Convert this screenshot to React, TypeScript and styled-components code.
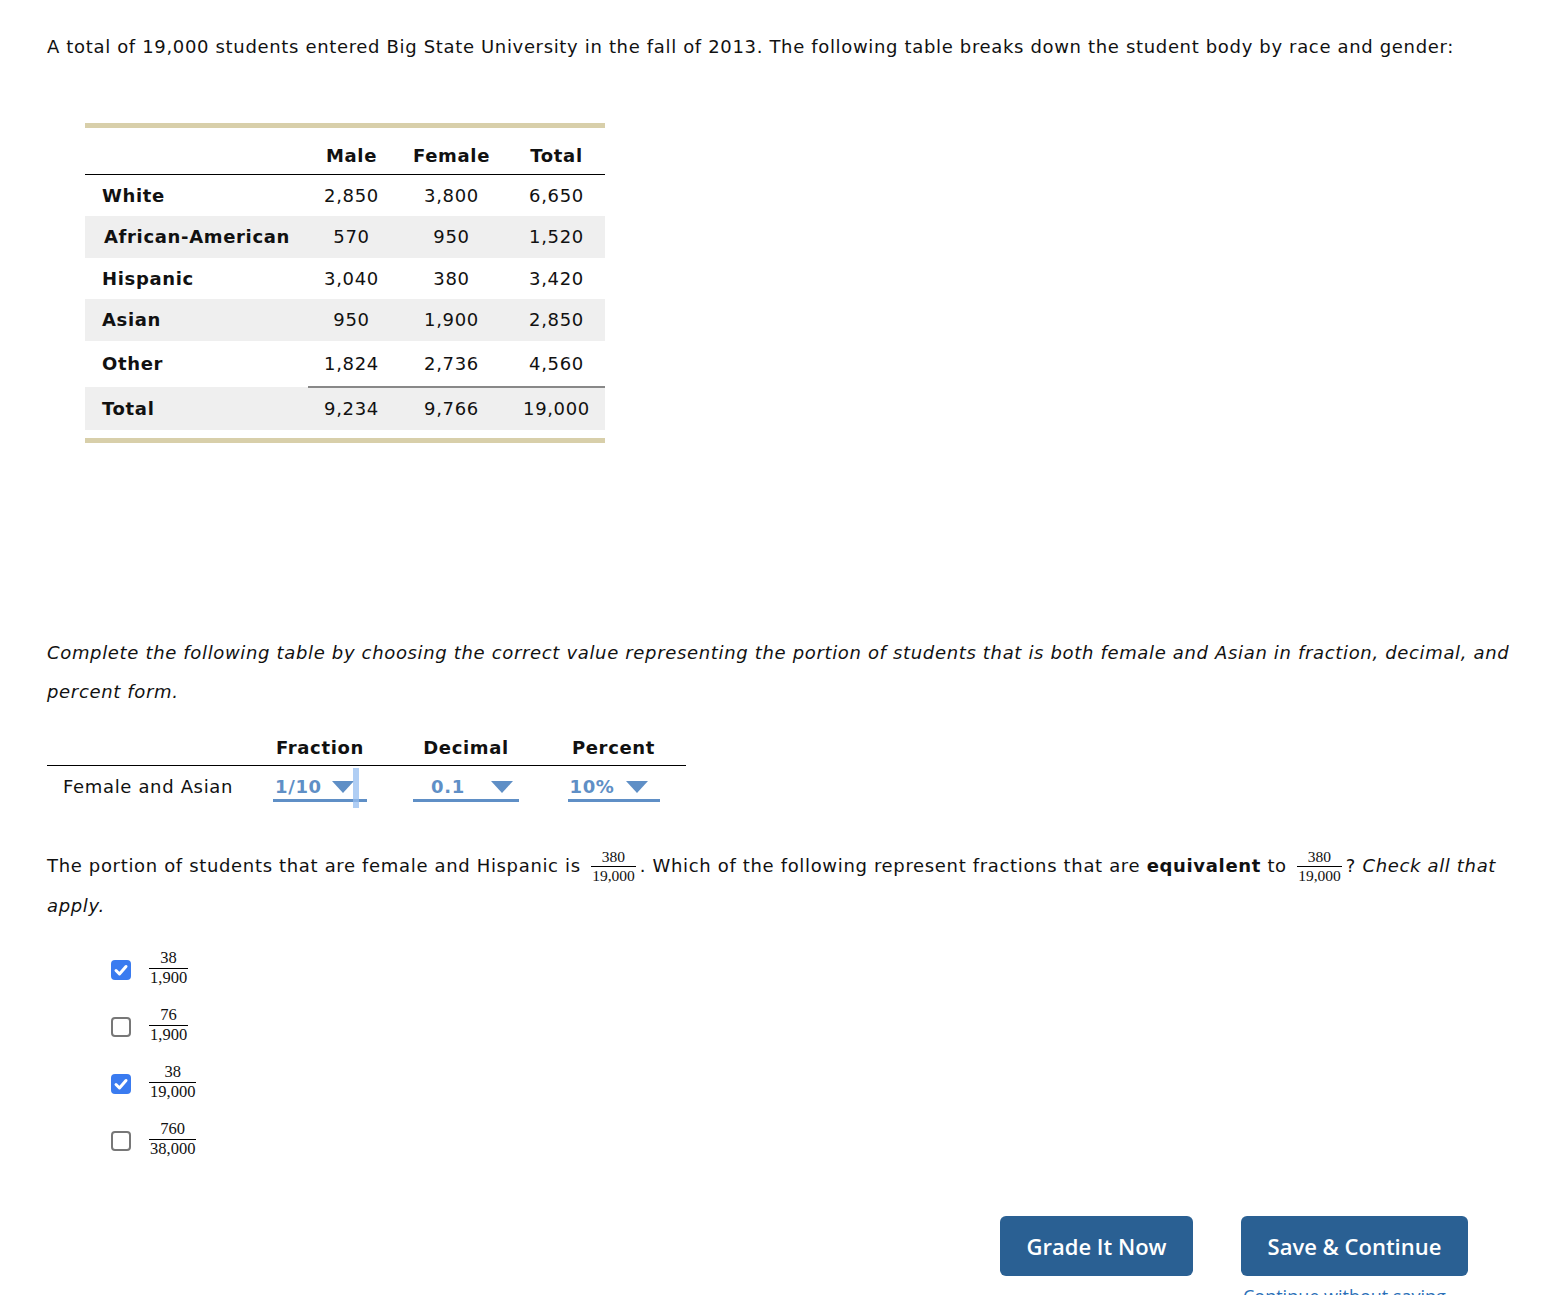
import styled, { createGlobalStyle } from 'styled-components'

const GlobalStyle = createGlobalStyle`
    body {
        margin: 0;
        background: #fff;
        color: #111;
        font-family: "DejaVu Sans", Verdana, sans-serif;
        font-size: 18px;
        letter-spacing: 0.66px;
    }
`

const Page = styled.div`
    width: 1550px;
    height: 1295px;
    overflow: hidden;
    box-sizing: border-box;
    padding: 27px 28px 0 47px;
`

const Paragraph = styled.p<{ $italic?: boolean }>`
    margin: 0;
    line-height: 39px;
    font-style: ${p => (p.$italic ? 'italic' : 'normal')};
`

const DataTable = styled.table`
    margin: 57px 0 0 38px;
    width: 520px;
    border-collapse: collapse;
    border-top: 5px solid #d8cfaa;
    border-bottom: 5px solid #d8cfaa;
`

const HeadCell = styled.th`
    height: 49px;
    padding: 0 0 8px 0;
    box-sizing: border-box;
    font-weight: bold;
    text-align: center;
    border-bottom: 1px solid #000;
    vertical-align: bottom;
`

const Row = styled.tr<{ $shaded?: boolean; $height?: number }>`
    height: ${p => p.$height ?? 41.5}px;
    background: ${p => (p.$shaded ? '#efefef' : 'transparent')};
`

const LabelCell = styled.td<{ $indent?: number }>`
    padding: 0 0 0 ${p => p.$indent ?? 17}px;
    font-weight: bold;
    text-align: left;
    white-space: nowrap;
`

const NumCell = styled.td<{ $rule?: boolean }>`
    padding: 0;
    text-align: center;
    border-top: ${p => (p.$rule ? '2px solid #888' : 'none')};
`

const Spacer = styled.tr`
    height: 11px;
`

const AnswerTable = styled.table`
    margin-top: 18px;
    width: 639px;
    border-collapse: collapse;
`

const AnswerHead = styled.th<{ $padRight?: number }>`
    height: 36px;
    padding: 0 ${p => p.$padRight ?? 0}px 0 0;
    font-weight: bold;
    text-align: center;
    border-bottom: 1px solid #000;
`

const AnswerLabel = styled.td`
    padding: 0 0 0 16px;
    height: 40px;
    text-align: left;
    white-space: nowrap;
`

const AnswerCell = styled.td<{ $padRight?: number }>`
    padding: 0 ${p => p.$padRight ?? 0}px 0 0;
    text-align: center;
`

const Dropdown = styled.span<{ $width: number; $gap: number; $pad: number }>`
    position: relative;
    display: inline-flex;
    align-items: center;
    gap: ${p => p.$gap}px;
    width: ${p => p.$width}px;
    height: 31px;
    padding: 4px 0 0 ${p => p.$pad}px;
    color: #5f8fc6;
    font-weight: bold;
    border-bottom: 3px solid #5f8fc6;
    box-sizing: border-box;
`

const Caret = styled.span`
    width: 0;
    height: 0;
    border-left: 11px solid transparent;
    border-right: 11px solid transparent;
    border-top: 12px solid #5f8fc6;
`

const FocusBar = styled.span`
    position: absolute;
    top: -3px;
    left: 80px;
    width: 6px;
    height: 40px;
    background: rgba(150, 190, 240, 0.75);
`

const Frac = styled.span<{ $size?: number }>`
    display: inline-flex;
    flex-direction: column;
    align-items: center;
    vertical-align: middle;
    font-family: "Liberation Serif", "Times New Roman", serif;
    font-size: ${p => p.$size ?? 15.5}px;
    letter-spacing: 0;
    line-height: 1.15;
    margin: 0 4px;
    font-style: normal;
    position: relative;
    top: -1px;
`

const Num = styled.span`
    padding: 0 1px;
`

const Den = styled.span`
    border-top: 1px solid #000;
    padding: 0 1px;
`

const ChoiceList = styled.div`
    margin: 15px 0 0 64px;
    display: flex;
    flex-direction: column;
`

const Choice = styled.label`
    height: 57px;
    display: flex;
    align-items: center;
    gap: 14px;
`

const Box = styled.span<{ $checked: boolean }>`
    width: 20px;
    height: 20px;
    box-sizing: border-box;
    border-radius: 4px;
    display: flex;
    align-items: center;
    justify-content: center;
    background: ${p => (p.$checked ? '#3a7bf0' : '#fff')};
    border: ${p => (p.$checked ? 'none' : '2px solid #777')};
`

const Actions = styled.div`
    margin-top: 47px;
    display: flex;
    justify-content: flex-end;
    gap: 48px;
    padding-right: 54px;
`

const ActionCol = styled.div`
    display: flex;
    flex-direction: column;
`

const Button = styled.button<{ $width: number }>`
    width: ${p => p.$width}px;
    height: 60px;
    border: none;
    border-radius: 6px;
    background: #2a6093;
    color: #fff;
    font-family: "Open Sans", sans-serif;
    font-weight: 600;
    font-size: 22px;
    letter-spacing: 0;
    cursor: pointer;
`

const SubLink = styled.a`
    margin-top: 8px;
    color: #2a6fb8;
    font-family: "Open Sans", sans-serif;
    font-size: 18px;
    letter-spacing: 0;
    padding-left: 2px;
`

const rows = [
    { label: 'White', m: '2,850', f: '3,800', t: '6,650' },
    { label: 'African-American', m: '570', f: '950', t: '1,520', indent: 19 },
    { label: 'Hispanic', m: '3,040', f: '380', t: '3,420' },
    { label: 'Asian', m: '950', f: '1,900', t: '2,850' },
    { label: 'Other', m: '1,824', f: '2,736', t: '4,560' },
]

const choices = [
    { n: '38', d: '1,900', checked: true },
    { n: '76', d: '1,900', checked: false },
    { n: '38', d: '19,000', checked: true },
    { n: '760', d: '38,000', checked: false },
]

function Fraction({ n, d, size }: { n: string; d: string; size?: number }) {
    return (
        <Frac $size={size}>
            <Num>{n}</Num>
            <Den>{d}</Den>
        </Frac>
    )
}

function Check() {
    return (
        <svg width="16" height="16" viewBox="0 0 16 16">
            <path d="M3 8.5 L6.5 12 L13 4.5" fill="none" stroke="#fff" strokeWidth="3" strokeLinecap="round" strokeLinejoin="round" />
        </svg>
    )
}

export default function App() {
    return (
        <Page>
            <GlobalStyle />
            <Paragraph>
                A total of 19,000 students entered Big State University in the fall of 2013. The following table breaks down the student body by race and gender:
            </Paragraph>

            <DataTable>
                <colgroup>
                    <col style={{ width: 223 }} />
                    <col style={{ width: 87 }} />
                    <col style={{ width: 113 }} />
                    <col style={{ width: 97 }} />
                </colgroup>
                <thead>
                    <tr>
                        <HeadCell />
                        <HeadCell>Male</HeadCell>
                        <HeadCell>Female</HeadCell>
                        <HeadCell>Total</HeadCell>
                    </tr>
                </thead>
                <tbody>
                    {rows.map((r, i) => (
                        <Row key={r.label} $shaded={i % 2 === 1} $height={i === 4 ? 46 : 41.5}>
                            <LabelCell $indent={r.indent}>{r.label}</LabelCell>
                            <NumCell>{r.m}</NumCell>
                            <NumCell>{r.f}</NumCell>
                            <NumCell>{r.t}</NumCell>
                        </Row>
                    ))}
                    <Row $shaded $height={43}>
                        <LabelCell>Total</LabelCell>
                        <NumCell $rule>9,234</NumCell>
                        <NumCell $rule>9,766</NumCell>
                        <NumCell $rule>19,000</NumCell>
                    </Row>
                    <Spacer />
                </tbody>
            </DataTable>

            <Paragraph $italic style={{ marginTop: 190 }}>
                Complete the following table by choosing the correct value representing the portion of students that is both female and Asian in fraction, decimal, and percent form.
            </Paragraph>

            <AnswerTable>
                <colgroup>
                    <col style={{ width: 222 }} />
                    <col style={{ width: 102 }} />
                    <col style={{ width: 190 }} />
                    <col style={{ width: 125 }} />
                </colgroup>
                <thead>
                    <tr>
                        <AnswerHead />
                        <AnswerHead>Fraction</AnswerHead>
                        <AnswerHead>Decimal</AnswerHead>
                        <AnswerHead $padRight={20}>Percent</AnswerHead>
                    </tr>
                </thead>
                <tbody>
                    <tr>
                        <AnswerLabel>Female and Asian</AnswerLabel>
                        <AnswerCell>
                            <Dropdown $width={94} $gap={10} $pad={2}>
                                1/10<Caret />
                                <FocusBar />
                            </Dropdown>
                        </AnswerCell>
                        <AnswerCell>
                            <Dropdown $width={106} $gap={26} $pad={18}>
                                0.1<Caret />
                            </Dropdown>
                        </AnswerCell>
                        <AnswerCell $padRight={20}>
                            <Dropdown $width={92} $gap={11} $pad={2}>
                                10%<Caret />
                            </Dropdown>
                        </AnswerCell>
                    </tr>
                </tbody>
            </AnswerTable>

            <Paragraph style={{ marginTop: 40, lineHeight: '40px' }}>
                The portion of students that are female and Hispanic is <Fraction n="380" d="19,000" />. Which of the following represent fractions that are <b>equivalent</b> to <Fraction n="380" d="19,000" />? <i>Check all that apply.</i>
            </Paragraph>

            <ChoiceList>
                {choices.map((c, i) => (
                    <Choice key={i}>
                        <Box $checked={c.checked}>{c.checked && <Check />}</Box>
                        <Fraction n={c.n} d={c.d} size={16.5} />
                    </Choice>
                ))}
            </ChoiceList>

            <Actions>
                <ActionCol>
                    <Button $width={193}>Grade It Now</Button>
                </ActionCol>
                <ActionCol>
                    <Button $width={227}>Save &amp; Continue</Button>
                    <SubLink>Continue without saving</SubLink>
                </ActionCol>
            </Actions>
        </Page>
    )
}
